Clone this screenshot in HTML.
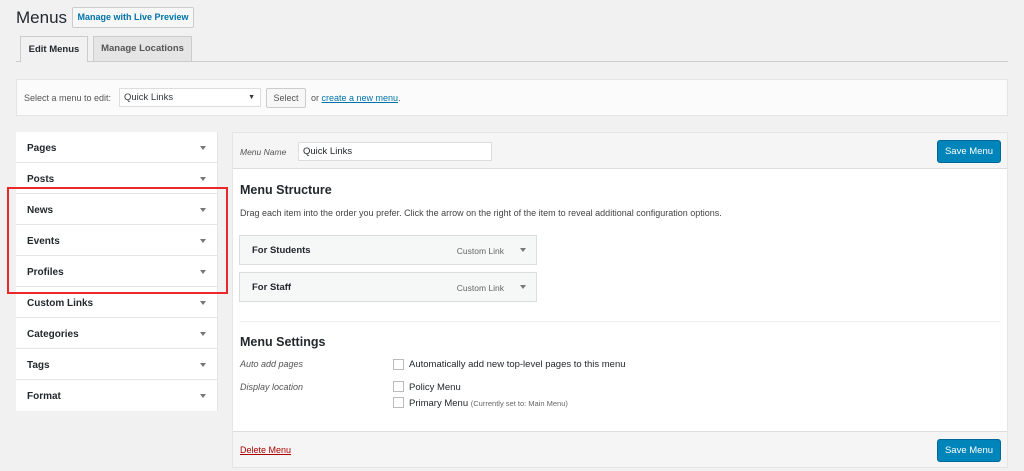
<!DOCTYPE html>
<html><head><style>
*{box-sizing:border-box;margin:0;padding:0}
body{width:1024px;height:471px;background:#f1f1f1;font-family:"Liberation Sans",sans-serif;color:#23282d;position:relative;overflow:hidden;font-size:10px}
.a{position:absolute}
.btn{border:1px solid #ccc;background:#f7f7f7;border-radius:2px}
.bp{background:#0085ba;border:1px solid #006799;border-radius:3px;color:#fff;font-size:9.5px;text-align:center;line-height:21px}
.li{position:absolute;left:16px;width:201px;height:31px;border-bottom:1px solid #e5e5e5;background:#fff;font-weight:bold;font-size:10px;line-height:33px;padding-left:11px}
.li:after{content:"";position:absolute;right:11px;top:14px;border:3.5px solid transparent;border-top:4px solid #777;border-bottom:0}
.mi{position:absolute;left:239px;width:298px;height:30px;background:#f6f7f7;border:1px solid #ddd;font-weight:bold;font-size:9.5px;line-height:30px;padding-left:12px}
.mi span{position:absolute;right:32px;font-weight:normal;color:#666;font-size:8.5px}
.mi:after{content:"";position:absolute;right:10px;top:12px;border:3px solid transparent;border-top:4px solid #777;border-bottom:0}
.cb{position:absolute;left:393px;width:11px;height:11px;border:1px solid #bbb;background:#fff}
.t{position:absolute;font-size:9.5px;white-space:nowrap}
</style></head><body>
<div class="a" style="left:16px;top:8px;font-size:17px;color:#23282d">Menus</div>
<div class="a btn" style="left:72px;top:7px;width:122px;height:21px;color:#0073aa;font-size:9px;font-weight:bold;line-height:19px;text-align:center">Manage with Live Preview</div>
<div class="a" style="left:16px;top:61px;width:992px;height:1px;background:#ccc"></div>
<div class="a" style="left:20px;top:36px;width:68px;height:26px;background:#f1f1f1;border:1px solid #ccc;border-bottom:none;font-weight:bold;font-size:9.5px;line-height:25px;text-align:center">Edit Menus</div>
<div class="a" style="left:93px;top:36px;width:99px;height:25px;background:#e5e5e5;border:1px solid #ccc;border-bottom:none;font-weight:bold;font-size:9.5px;color:#555;line-height:24px;text-align:center">Manage Locations</div>
<div class="a" style="left:16px;top:79px;width:992px;height:37px;background:#fbfbfb;border:1px solid #e5e5e5"></div>
<div class="t" style="left:24px;top:93px;color:#555;font-size:9px">Select a menu to edit:</div>
<div class="a" style="left:119px;top:88px;width:142px;height:19px;background:#fff;border:1px solid #ddd;font-size:9.5px;line-height:18px;padding-left:4px;color:#32373c">Quick Links<span style="position:absolute;right:5px;top:0;font-size:7px">▼</span></div>
<div class="a btn" style="left:266px;top:88px;width:40px;height:20px;font-size:9px;line-height:18px;text-align:center;color:#555">Select</div>
<div class="t" style="left:311px;top:93px;color:#555;font-size:9px">or <span style="color:#0073aa;text-decoration:underline">create a new menu</span>.</div>
<div class="a" style="left:16px;top:132px;width:202px;height:279px;background:#fff;border:1px solid #e5e5e5"></div>
<div class="li" style="top:132px">Pages</div>
<div class="li" style="top:163px">Posts</div>
<div class="li" style="top:194px">News</div>
<div class="li" style="top:225px">Events</div>
<div class="li" style="top:256px">Profiles</div>
<div class="li" style="top:287px">Custom Links</div>
<div class="li" style="top:318px">Categories</div>
<div class="li" style="top:349px">Tags</div>
<div class="li" style="top:380px;border:none">Format</div>
<div class="a" style="left:7px;top:187px;width:221px;height:107px;border:2px solid #e8282b"></div>
<div class="a" style="left:232px;top:132px;width:776px;height:336px;background:#fff;border:1px solid #e5e5e5"></div>
<div class="a" style="left:233px;top:133px;width:774px;height:36px;background:#f5f5f5;border-bottom:1px solid #ddd"></div>
<div class="t" style="left:240px;top:147px;font-style:italic;color:#555;font-size:8.5px">Menu Name</div>
<div class="a" style="left:298px;top:142px;width:194px;height:19px;background:#fff;border:1px solid #ddd;font-size:9.5px;line-height:18px;padding-left:4px">Quick Links</div>
<div class="a bp" style="left:937px;top:140px;width:64px;height:23px">Save Menu</div>
<div class="t" style="left:240px;top:183px;font-size:12.5px;font-weight:bold">Menu Structure</div>
<div class="t" style="left:240px;top:208px;font-size:9px;color:#444">Drag each item into the order you prefer. Click the arrow on the right of the item to reveal additional configuration options.</div>
<div class="mi" style="top:235px">For Students<span>Custom Link</span></div>
<div class="mi" style="top:272px">For Staff<span>Custom Link</span></div>
<div class="a" style="left:240px;top:321px;width:760px;height:1px;background:#eee"></div>
<div class="t" style="left:240px;top:335px;font-size:12.5px;font-weight:bold">Menu Settings</div>
<div class="t" style="left:240px;top:359px;font-style:italic;color:#555;font-size:9px">Auto add pages</div>
<div class="t" style="left:240px;top:382px;font-style:italic;color:#555;font-size:9px">Display location</div>
<div class="cb" style="top:359px"></div><div class="t" style="left:409px;top:359px">Automatically add new top-level pages to this menu</div>
<div class="cb" style="top:381px"></div><div class="t" style="left:409px;top:382px">Policy Menu</div>
<div class="cb" style="top:397px"></div><div class="t" style="left:409px;top:398px">Primary Menu <span style="font-size:7.5px;color:#666">(Currently set to: Main Menu)</span></div>
<div class="a" style="left:233px;top:431px;width:774px;height:36px;background:#f5f5f5;border-top:1px solid #ddd"></div>
<div class="t" style="left:240px;top:445px;color:#a00;text-decoration:underline;font-size:9px">Delete Menu</div>
<div class="a bp" style="left:937px;top:439px;width:64px;height:23px">Save Menu</div>
</body></html>
